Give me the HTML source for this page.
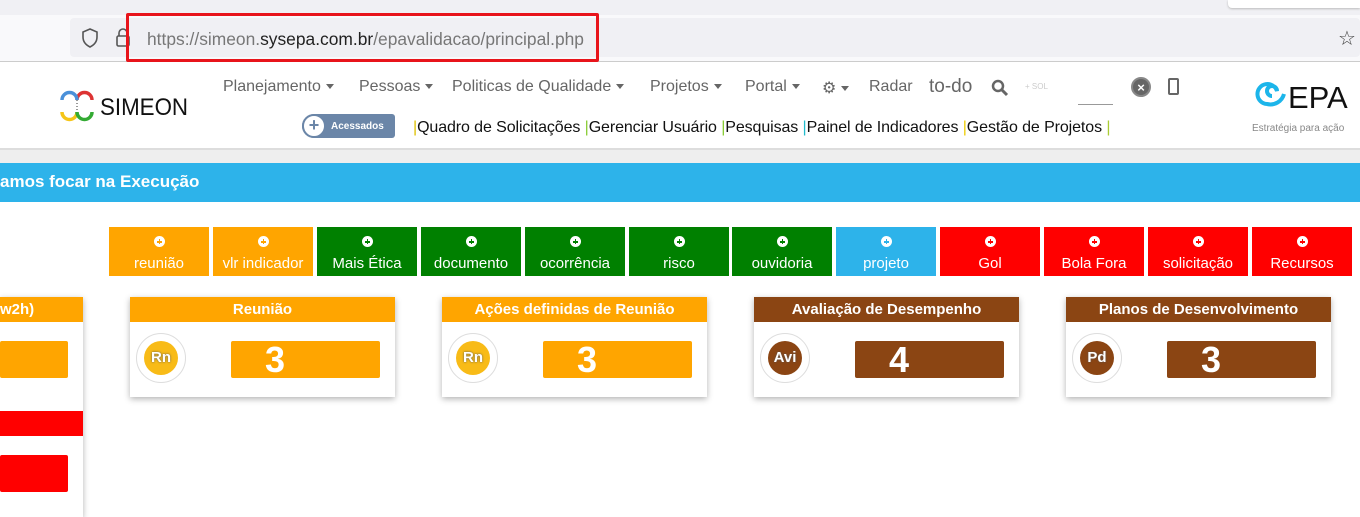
<!DOCTYPE html>
<html><head><meta charset="utf-8"><style>
*{box-sizing:border-box;margin:0;padding:0}
body{width:1360px;height:508px;overflow:hidden;background:#fff;font-family:"Liberation Sans","DejaVu Sans",sans-serif;position:relative}
.a{position:absolute}
.nav{font-size:16px;color:#666;top:78px;white-space:nowrap}
.car{display:inline-block;border-left:4px solid transparent;border-right:4px solid transparent;border-top:5px solid #666;vertical-align:middle;margin-left:5px}
.btn{position:absolute;top:227px;width:100px;height:49px;color:#fff;font-size:15px;text-align:center}
.btn i{display:block;margin:9px auto 8px;width:11px;height:11px;border-radius:50%;background:#fff;position:relative;font-style:normal}
.btn i:before{content:"";position:absolute;left:3px;top:5px;width:5px;height:1.5px;background:currentColor}
.btn i:after{content:"";position:absolute;left:5px;top:3px;width:1.5px;height:5px;background:currentColor}
.o{background:#ffa500;color:#ffa500}.g{background:#008000;color:#008000}.b{background:#2db3ea;color:#2db3ea}.r{background:#ff0000;color:#f00}
.btn span{color:#fff}
.card{position:absolute;top:297px;width:265px;height:100px;background:#fff;box-shadow:0 2px 6px rgba(0,0,0,.3)}
.card h4{height:25px;line-height:25px;color:#fff;text-align:center;font-size:15px;font-weight:bold}
.card .c{position:absolute;left:6px;top:36px;width:50px;height:50px;border-radius:50%;border:1px solid #ddd}
.card .c div{position:absolute;left:7px;top:7px;width:34px;height:34px;border-radius:50%;color:#fff;font-weight:bold;font-size:15px;line-height:34px;text-align:center;text-shadow:0 0 2px #555}
.card .v{position:absolute;left:101px;top:44px;width:149px;height:37px;border-radius:2px;color:#fff;font-size:36px;font-weight:bold;line-height:38px;text-align:left;padding-left:34px}
</style></head><body>
<div class="a" style="left:0;top:0;width:1360px;height:15px;background:#f0f0f4"></div>
<div class="a" style="left:1228px;top:0;width:132px;height:8px;background:#fff;border-radius:0 0 0 4px;box-shadow:0 1px 2px #bbb"></div>
<div class="a" style="left:0;top:15px;width:1360px;height:47px;background:#f9f9fb;border-bottom:1px solid #ccc"></div>
<div class="a" style="left:70px;top:18px;width:1290px;height:39px;background:#f0f0f4;border-radius:4px"></div>
<svg class="a" style="left:80px;top:27px" width="20" height="22" viewBox="0 0 20 22"><path d="M10 2 L17 5 V10 C17 15 14 18 10 20 C6 18 3 15 3 10 V5 Z" fill="none" stroke="#555" stroke-width="1.6"/></svg>
<svg class="a" style="left:115px;top:26px" width="16" height="22" viewBox="0 0 16 22"><path d="M4 10 V7 a4 4 0 0 1 8 0 V10" fill="none" stroke="#555" stroke-width="1.6"/><rect x="2" y="10" width="12" height="10" rx="1.5" fill="none" stroke="#555" stroke-width="1.6"/></svg>
<div class="a" style="left:147px;top:29px;font-size:17.4px;color:#777;white-space:nowrap">https://simeon.<span style="color:#222">sysepa.com.br</span>/epavalidacao/principal.php</div>
<div class="a" style="left:126px;top:13px;width:473px;height:49px;border:3px solid #e8141b;border-radius:2px"></div>
<div class="a" style="left:1338px;top:26px;font-size:20px;color:#444">☆</div>

<svg class="a" style="left:60px;top:88px" width="34" height="36" viewBox="0 0 34 36"><path d="M17 12 A7.5 7.5 0 0 1 32 12" fill="none" stroke="#d33" stroke-width="3.5"/><path d="M2 12 A7.5 7.5 0 0 1 17 12" fill="none" stroke="#4a90d9" stroke-width="3.5"/><path d="M2 24 A7.5 7.5 0 0 0 17 24" fill="none" stroke="#f5c518" stroke-width="3.5"/><path d="M17 24 A7.5 7.5 0 0 0 32 24" fill="none" stroke="#3a3" stroke-width="3.5"/><path d="M17 12 V24" stroke="#333" stroke-width="1" stroke-dasharray="1 2"/></svg>
<div class="a" style="left:100px;top:94px;font-size:24px;color:#111;transform:scaleX(.93);transform-origin:left">SIMEON</div>

<div class="a nav" style="left:223px">Planejamento<span class="car"></span></div>
<div class="a nav" style="left:359px">Pessoas<span class="car"></span></div>
<div class="a nav" style="left:452px">Politicas de Qualidade<span class="car"></span></div>
<div class="a nav" style="left:650px">Projetos<span class="car"></span></div>
<div class="a nav" style="left:745px">Portal<span class="car"></span></div>
<div class="a nav" style="left:822px">⚙<span class="car"></span></div>
<div class="a nav" style="left:869px">Radar</div>
<div class="a nav" style="left:929px;top:76px;font-size:19px">to-do</div>
<svg class="a" style="left:991px;top:79px" width="18" height="18" viewBox="0 0 18 18"><circle cx="7" cy="7" r="5" fill="none" stroke="#666" stroke-width="2.5"/><path d="M11 11 L16 16" stroke="#666" stroke-width="3"/></svg>
<div class="a" style="left:1025px;top:82px;font-size:8px;color:#ccc">+ SOL</div>
<div class="a" style="left:1078px;top:104px;width:35px;height:1px;background:#999"></div>
<div class="a" style="left:1131px;top:77px;width:20px;height:20px;border-radius:50%;background:#666;color:#fff;font-size:13px;text-align:center;line-height:17px;font-weight:bold;border:2px solid #888">×</div>
<div class="a" style="left:1168px;top:78px;width:11px;height:17px;border:2px solid #666;border-radius:2px"></div>
<svg class="a" style="left:1252px;top:74px" width="36" height="42" viewBox="0 0 36 42"><path d="M20 22 A5 5 0 1 1 25 17 A10 10 0 1 0 15 30 A14 14 0 0 0 32 20" fill="none" stroke="#1cb5ea" stroke-width="4"/></svg>
<div class="a" style="left:1288px;top:80px;font-size:31px;color:#111">EPA</div>
<div class="a" style="left:1252px;top:123px;font-size:10px;color:#888">Estratégia para ação</div>

<div class="a" style="left:302px;top:114px;width:93px;height:24px;background:#6b86a8;border-radius:12px 3px 3px 12px;color:#fff;font-size:10px;font-weight:bold;line-height:26px;padding-left:29px">Acessados</div>
<div class="a" style="left:302px;top:114px;width:24px;height:24px;border-radius:50%;background:#fff;border:2px solid #6b86a8;color:#6b86a8;font-size:18px;line-height:19px;text-align:center;font-weight:bold">+</div>
<div class="a" style="left:413px;top:119px;font-size:16px;color:#111;white-space:nowrap;letter-spacing:-.1px"><span style="color:#ddc000">|</span>Quadro de Solicitações <span style="color:#8c3">|</span>Gerenciar Usuário <span style="color:#8c3">|</span>Pesquisas <span style="color:#2bc">|</span>Painel de Indicadores <span style="color:#ec0">|</span>Gestão de Projetos <span style="color:#ac3">|</span></div>

<div class="a" style="left:0;top:148px;width:1360px;height:15px;background:#eee;border-top:2px solid #ddd"></div>
<div class="a" style="left:0;top:163px;width:1360px;height:39px;background:#2db3ea;color:#fff;font-size:17px;font-weight:bold;line-height:37px">amos focar na Execução</div>

<div class="btn o" style="left:109px"><i></i><span>reunião</span></div>
<div class="btn o" style="left:213px"><i></i><span>vlr indicador</span></div>
<div class="btn g" style="left:317px"><i></i><span>Mais Ética</span></div>
<div class="btn g" style="left:421px"><i></i><span>documento</span></div>
<div class="btn g" style="left:525px"><i></i><span>ocorrência</span></div>
<div class="btn g" style="left:629px"><i></i><span>risco</span></div>
<div class="btn g" style="left:732px"><i></i><span>ouvidoria</span></div>
<div class="btn b" style="left:836px"><i></i><span>projeto</span></div>
<div class="btn r" style="left:940px"><i></i><span>Gol</span></div>
<div class="btn r" style="left:1044px"><i></i><span>Bola Fora</span></div>
<div class="btn r" style="left:1148px"><i></i><span>solicitação</span></div>
<div class="btn r" style="left:1252px"><i></i><span>Recursos</span></div>

<div class="a" style="left:0;top:297px;width:83px;height:220px;background:#fff;box-shadow:0 2px 6px rgba(0,0,0,.3)"></div>
<div class="a" style="left:0;top:297px;width:83px;height:25px;background:#ffa500;color:#fff;font-weight:bold;font-size:15px;line-height:25px">w2h)</div>
<div class="a" style="left:0;top:341px;width:68px;height:37px;background:#ffa500;border-radius:2px"></div>
<div class="a" style="left:0;top:411px;width:83px;height:25px;background:#f00"></div>
<div class="a" style="left:0;top:455px;width:68px;height:37px;background:#f00;border-radius:2px"></div>

<div class="card" style="left:130px"><h4 style="background:#ffa500">Reunião</h4><div class="c"><div style="background:#f8bb17">Rn</div></div><div class="v" style="background:#ffa500">3</div></div>
<div class="card" style="left:442px"><h4 style="background:#ffa500">Ações definidas de Reunião</h4><div class="c"><div style="background:#f8bb17">Rn</div></div><div class="v" style="background:#ffa500">3</div></div>
<div class="card" style="left:754px"><h4 style="background:#8b4513">Avaliação de Desempenho</h4><div class="c"><div style="background:#8b4513">Avi</div></div><div class="v" style="background:#8b4513">4</div></div>
<div class="card" style="left:1066px"><h4 style="background:#8b4513">Planos de Desenvolvimento</h4><div class="c"><div style="background:#8b4513">Pd</div></div><div class="v" style="background:#8b4513">3</div></div>
</body></html>
